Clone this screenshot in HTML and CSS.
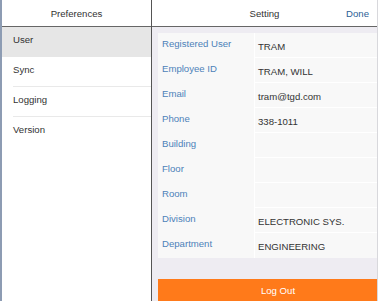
FILE: index.html
```html
<!DOCTYPE html>
<html>
<head>
<meta charset="utf-8">
<link rel="stylesheet" href="styles.css">
</head>
<body>
<div class="app">
  <aside class="side">
    <header class="side-head">Preferences</header>
    <ul class="menu">
      <li class="item active"><span class="item-in">User</span></li>
      <li class="item"><span class="item-in">Sync</span></li>
      <li class="item"><span class="item-in">Logging</span></li>
      <li class="item"><span class="item-in last">Version</span></li>
    </ul>
  </aside>
  <main class="main">
    <header class="main-head">
      <span class="title">Setting</span>
      <span class="done">Done</span>
    </header>
    <div class="card">
      <div class="row"><div class="label">Registered User</div><div class="value">TRAM</div></div>
      <div class="row"><div class="label">Employee ID</div><div class="value">TRAM, WILL</div></div>
      <div class="row"><div class="label">Email</div><div class="value">tram@tgd.com</div></div>
      <div class="row"><div class="label">Phone</div><div class="value">338-1011</div></div>
      <div class="row"><div class="label">Building</div><div class="value"></div></div>
      <div class="row"><div class="label">Floor</div><div class="value"></div></div>
      <div class="row"><div class="label">Room</div><div class="value"></div></div>
      <div class="row"><div class="label">Division</div><div class="value">ELECTRONIC SYS.</div></div>
      <div class="row"><div class="label">Department</div><div class="value">ENGINEERING</div></div>
    </div>
    <div class="logout">Log Out</div>
  </main>
</div>
</body>
</html>
```

FILE: styles.css
```css
* { box-sizing: border-box; }
html, body { margin: 0; padding: 0; }
body {
  width: 378px;
  height: 301px;
  overflow: hidden;
  font-family: "Liberation Sans", Arial, sans-serif;
  font-size: 9.6px;
  color: #333;
  background: #fff;
}
.app {
  display: flex;
  height: 301px;
}
.side {
  width: 152px;
  flex: none;
  border-left: 2px solid #8d9cb3;
  border-right: 1px solid #555;
  background: #fff;
}
.side-head, .main-head {
  height: 27px;
  border-bottom: 1px solid #666;
  background: #fff;
  display: flex;
  align-items: center;
  justify-content: center;
  color: #333;
}
.side-head { padding-top: 1px; }
.menu {
  list-style: none;
  margin: 0;
  padding: 0;
}
.item {
  padding-left: 11px;
}
.item-in {
  display: block;
  height: 30px;
  padding-top: 7px;
  line-height: 12px;
  border-bottom: 1px solid #e9e9e9;
}
.item.active {
  background: #e6e6e6;
}
.item.active .item-in { border-bottom-color: #e6e6e6; }
.item-in.last { border-bottom-color: transparent; }
.main {
  flex: 1;
  display: flex;
  flex-direction: column;
  background: #eeecf2;
  border-right: 1px solid #d8d8dc;
}
.main-head {
  position: relative;
  padding-top: 1px;
}
.done {
  position: absolute;
  right: 8px;
  top: 8px;
  color: #2d5f96;
}
.card {
  margin: 6px 0 0 6px;
  background: #fff;
}
.row {
  display: flex;
  height: 25px;
}
.label {
  width: 96px;
  flex: none;
  background: #f8f8f8;
  color: #4d82b8;
  padding: 5px 0 0 4px;
  line-height: 12px;
}
.value {
  flex: 1;
  margin-left: 1px;
  background: #f8f8f8;
  border-bottom: 1px solid #fff;
  padding: 8px 0 0 3px;
  line-height: 12px;
}
.row:last-child .value { border-bottom: none; }
.logout {
  margin: 21px 0 0 6px;
  height: 22px;
  background: #ff7a1a;
  color: #fff;
  display: flex;
  align-items: center;
  justify-content: center;
  padding-left: 21px;
}
```
